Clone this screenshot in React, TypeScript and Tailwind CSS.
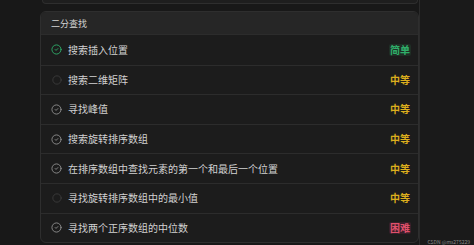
import { Circle, CircleCheck } from "lucide-react";

type Level = "easy" | "medium" | "hard";

interface Problem {
  title: string;
  level: Level;
  done: boolean;
  accent?: boolean;
}

const problems: Problem[] = [
  { title: "搜索插入位置", level: "easy", done: true, accent: true },
  { title: "搜索二维矩阵", level: "medium", done: false },
  { title: "寻找峰值", level: "medium", done: true },
  { title: "搜索旋转排序数组", level: "medium", done: true },
  { title: "在排序数组中查找元素的第一个和最后一个位置", level: "medium", done: true },
  { title: "寻找旋转排序数组中的最小值", level: "medium", done: false },
  { title: "寻找两个正序数组的中位数", level: "hard", done: true },
];

const levelText: Record<Level, string> = {
  easy: "简单",
  medium: "中等",
  hard: "困难",
};

const levelClass: Record<Level, string> = {
  easy: "text-[#2fae6a] bg-[#1f2e25]",
  medium: "text-[#dcae1d]",
  hard: "text-[#e0506a] bg-[#36202a]",
};

function Row({ p, first }: { p: Problem; first: boolean }) {
  return (
    <div
      className={`h-[29.6px] flex items-center pl-[10px] pr-[7px] ${
        first ? "" : "border-t border-[#2c2c2c]"
      }`}
    >
      <div className="w-[11px] h-[11px] flex items-center justify-center">
        {p.done ? (
          <CircleCheck
            size={11}
            strokeWidth={2}
            className={p.accent ? "text-[#2fae6a]" : "text-[#8f8f8f]"}
          />
        ) : (
          <Circle size={10} strokeWidth={1.6} className="text-[#474747]" />
        )}
      </div>
      <span className="ml-[6px] flex-1 text-[10px] text-[#d2d2d2] leading-none">
        {p.title}
      </span>
      <span
        className={`text-[10px] font-semibold leading-none px-[1px] py-[1px] rounded-[2px] ${levelClass[p.level]}`}
      >
        {levelText[p.level]}
      </span>
    </div>
  );
}

export default function App() {
  return (
    <div
      className="w-[474px] h-[245px] bg-[#181818] flex overflow-hidden"
      style={{ fontFamily: '"Noto Sans CJK SC", "Noto Sans", sans-serif' }}
    >
      <div className="w-[420px] h-full border-r border-[#2b2b2b] flex flex-col">
        <div className="ml-[42px] w-[376px] h-[4px] bg-[#1e1e1e] border-b border-x border-[#2e2e2e] rounded-b-[4px]" />
        <div className="mt-[7px] ml-[40px] w-[379px] rounded-[6px] border border-[#2e2e2e] bg-[#1c1c1c] overflow-hidden">
          <div className="h-[23px] bg-[#262626] flex items-center pl-[10px] border-b border-[#2c2c2c]">
            <span className="text-[9px] text-[#d4d4d4] leading-none">二分查找</span>
          </div>
          {problems.map((p, i) => (
            <Row key={p.title} p={p} first={i === 0} />
          ))}
        </div>
      </div>
      <div className="flex-1 relative bg-[#1a1a1a]">
        <span className="absolute right-[4px] bottom-[1px] text-[5px] text-[#8a8a8a] leading-none whitespace-nowrap">
          CSDN @ms275229
        </span>
      </div>
    </div>
  );
}
